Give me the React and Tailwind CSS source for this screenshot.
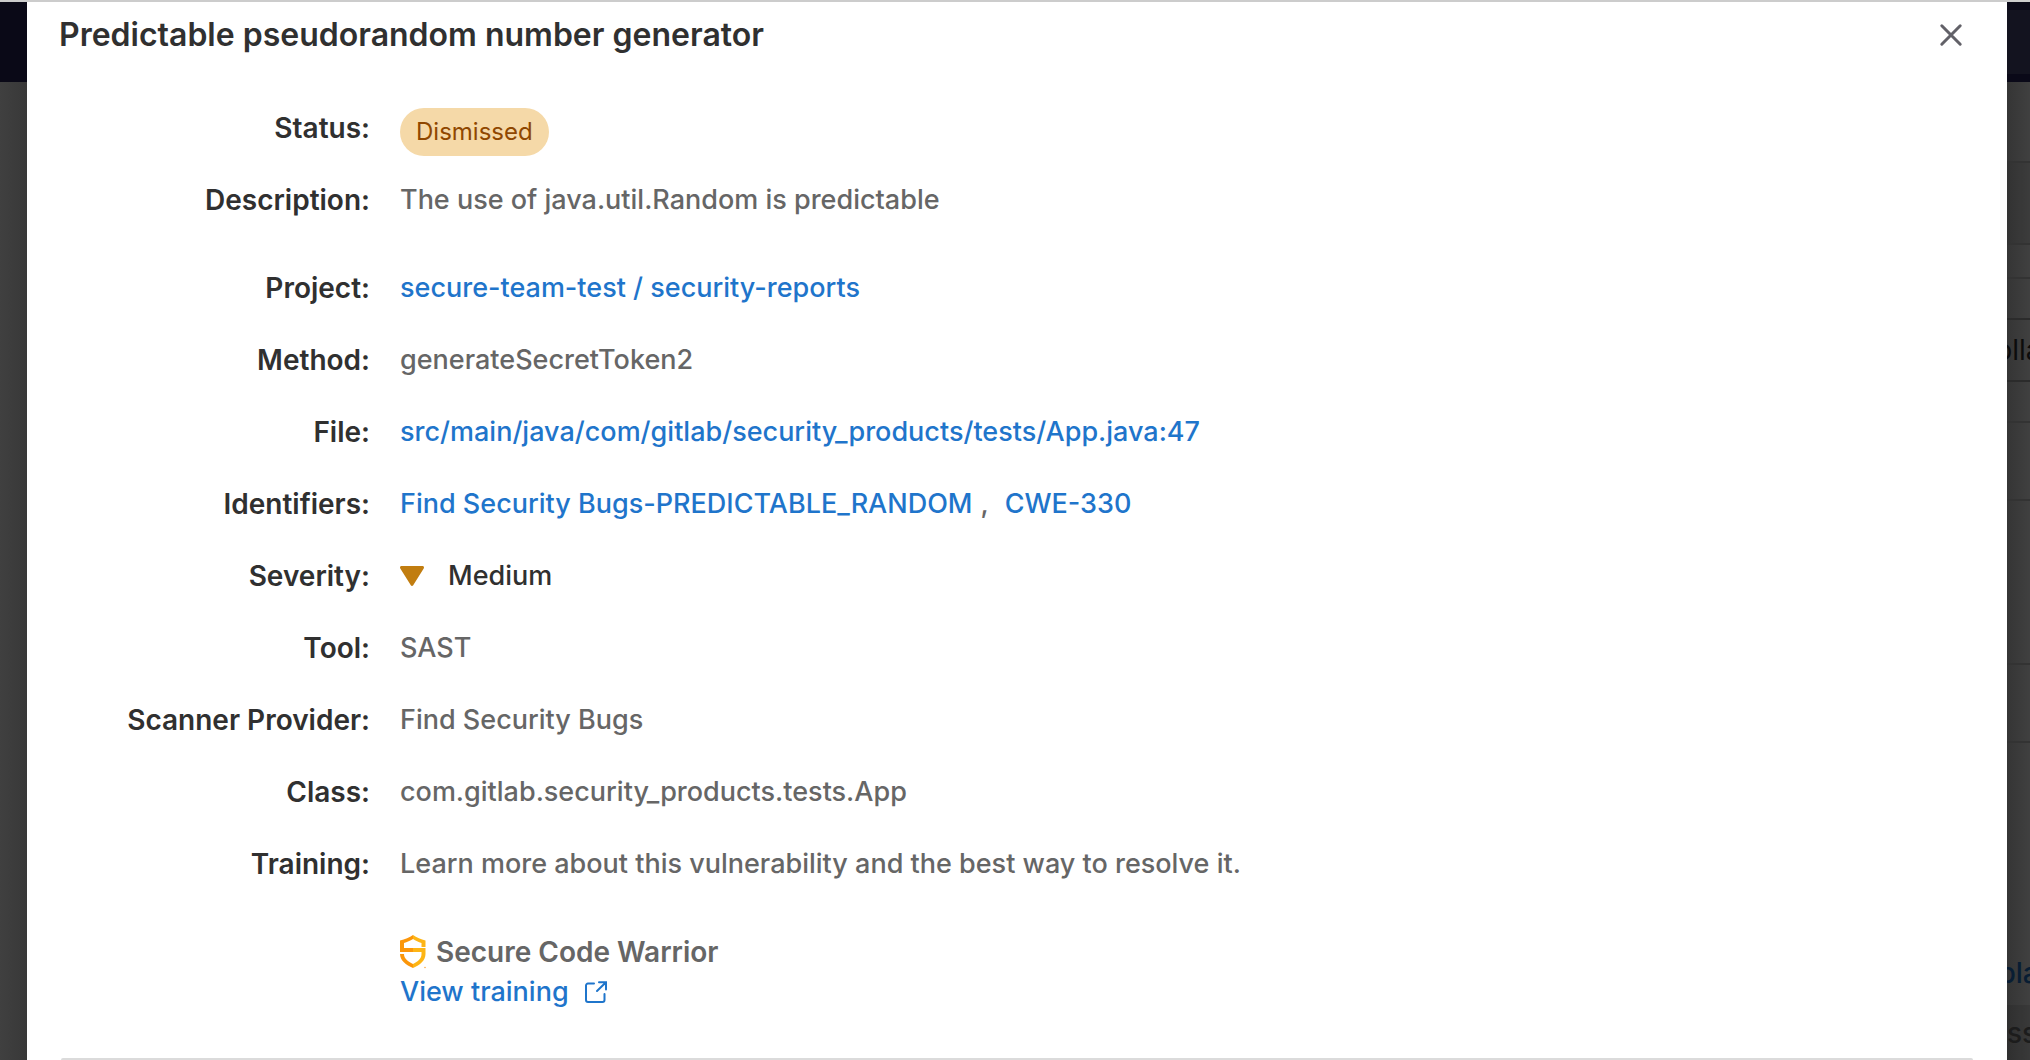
import { useState } from "react";

const linkStyle = "text-[#1f75cb] hover:underline";

function CloseIcon() {
  return (
    <svg width="32" height="32" viewBox="0 0 16 16" aria-hidden="true">
      <path
        d="M3.4 3.4l9.200 9.200M12.600 3.400l-9.200 9.200"
        stroke="#626168"
        strokeWidth="1.5"
        strokeLinecap="round"
      />
    </svg>
  );
}

function SeverityMediumIcon() {
  return (
    <svg width="24" height="20" viewBox="0 0 24 20" aria-hidden="true">
      <path
        d="M1.5 0h21c1.3 0 1.9 1.3 1.2 2.4L13.2 19.2c-.6.9-1.8.9-2.4 0L.3 2.4C-.4 1.300.2 0 1.500 0z"
        fill="#c17d10"
      />
    </svg>
  );
}

function SecureCodeWarriorLogo() {
  return (
    <svg width="28" height="34" viewBox="0 0 28 34" aria-hidden="true">
      <path d="M13 0C9.500 2.500 5 4.500 0 5.500V17h13v-4H4V8C7 7.200 10.300 5.700 13 4z" fill="#fb960a" />
      <path d="M13 0c3.500 2.500 8 4.500 12.500 5.500V12H21.500V8C18.500 7.200 15.700 5.700 13 4z" fill="#fdb515" />
      <path d="M13 13h12.500V19c0 6.500-5.500 11-12.500 14v-4c5-2.300 8.500-5.500 8.500-10v-2H13z" fill="#fdb515" />
      <path d="M0 19h4c0 4.500 4 7.700 9 10v4C6 30 0 25.500 0 19z" fill="#fb960a" />
      <circle cx="25" cy="32.500" r="0.8" fill="#fba94a" />
    </svg>
  );
}

function ExternalLinkIcon() {
  return (
    <svg width="22" height="22" viewBox="0 0 22 22" fill="none" stroke="#1f75cb" strokeWidth="2" aria-hidden="true">
      <path d="M9 2.500H3a2 2 0 0 0-2 2V19a2 2 0 0 0 2 2h14.500a2 2 0 0 0 2-2v-6" strokeLinecap="round" />
      <path d="M14 1.200H21V8.500M20.500 1.700L12 10" strokeLinecap="round" />
    </svg>
  );
}

function DetailRow({ label, children }) {
  return (
    <div className="flex gap-[30px]">
      <dt className="w-[311px] shrink-0 text-right text-[28px] font-semibold text-[#303030]">{label}:</dt>
      <dd className="min-w-0 flex-1 font-medium">{children}</dd>
    </div>
  );
}

// The part of the page that stays visible on the right of the modal
function PageBehind() {
  return (
    <div className="flex w-[23px] shrink-0 flex-col overflow-hidden bg-linear-to-r from-[#353535] to-[#404040] text-[28px] leading-10">
      <div className="h-20 border-y-8 border-[#0a0918] bg-[#13131f]" />
      <div className="h-[81px] border-b-2 border-[#333333]" />
      <div className="h-[82px] border-b-2 border-[#333333] bg-black/5" />
      <div className="h-[34px] border-b-2 border-[#333333]" />
      <div className="h-[41px] border-b-2 border-[#2b2b2b]" />
      <div className="flex h-[62px] items-center justify-center border-b-2 border-[#2b2b2b] text-[#0c0c0c]">olla</div>
      <div className="h-[41px] border-b-2 border-[#333333]" />
      <div className="h-[78px] border-b-2 border-[#333333]" />
      <div className="h-[164px] border-b-2 border-[#333333]" />
      <div className="h-[78px] border-b-2 border-[#333333]" />
      <div className="flex h-[262px] items-end justify-center pb-3 font-medium text-[#081d33]">pla</div>
      <div className="flex flex-1 items-start bg-black/10 pt-2 font-medium text-[#1c1c1c]">ss</div>
    </div>
  );
}

function App() {
  const [open, setOpen] = useState(true);

  return (
    <div className="flex min-h-screen flex-col border-t-2 border-[#cccccc] bg-[#404040] font-['Inter',sans-serif]">
      <div className="flex flex-1">
        <div className="w-[27px] shrink-0 bg-linear-to-r from-[#404040] to-[#383838]">
          <div className="h-20 bg-[#0a0917]" />
        </div>
        {open && (
          <main role="dialog" aria-labelledby="modal-title" className="flex min-w-0 flex-1 flex-col bg-white px-8">
            <header className="flex h-[66px] items-center justify-between pr-2">
              <h1 id="modal-title" className="text-[32px] leading-10 font-semibold text-[#303030]">
                Predictable pseudorandom number generator
              </h1>
              <button type="button" aria-label="Close" onClick={() => setOpen(false)}>
                <CloseIcon />
              </button>
            </header>
            <dl className="flex flex-col gap-8 pt-10 text-[27px] leading-10 text-[#666666]">
              <DetailRow label="Status">
                <span className="flex h-10 items-start">
                  <span className="h-12 shrink-0 rounded-full bg-[#f5d9a8] px-4 text-[24px] leading-12 font-normal text-[#8f4700]">
                    Dismissed
                  </span>
                </span>
              </DetailRow>
              <DetailRow label="Description">
                <p className="pb-4">The use of java.util.Random is predictable</p>
              </DetailRow>
              <DetailRow label="Project">
                <a href="#project" className={linkStyle}>secure-team-test / security-reports</a>
              </DetailRow>
              <DetailRow label="Method">generateSecretToken2</DetailRow>
              <DetailRow label="File">
                <a href="#file" className={linkStyle}>
                  src/main/java/com/gitlab/security_products/tests/App.java:47
                </a>
              </DetailRow>
              <DetailRow label="Identifiers">
                <a href="#bug" className={linkStyle}>Find Security Bugs-PREDICTABLE_RANDOM</a>
                <span className="pr-4 pl-2">,</span>
                <a href="#cwe" className={linkStyle}>CWE-330</a>
              </DetailRow>
              <DetailRow label="Severity">
                <span className="flex items-center gap-6 text-[#303030]">
                  <SeverityMediumIcon />
                  Medium
                </span>
              </DetailRow>
              <DetailRow label="Tool">SAST</DetailRow>
              <DetailRow label="Scanner Provider">Find Security Bugs</DetailRow>
              <DetailRow label="Class">com.gitlab.security_products.tests.App</DetailRow>
              <DetailRow label="Training">
                <p>Learn more about this vulnerability and the best way to resolve it.</p>
                <div className="flex items-center gap-2 pt-12 text-[28px] font-semibold">
                  <SecureCodeWarriorLogo />
                  Secure Code Warrior
                </div>
                <a href="#training" className="inline-flex items-center gap-4 text-[#1f75cb] hover:underline">
                  View training
                  <ExternalLinkIcon />
                </a>
              </DetailRow>
            </dl>
            <div className="mx-0.5 mt-[46px] h-0.5 rounded-t-full bg-[#dbdbdb]" />
          </main>
        )}
        <PageBehind />
      </div>
    </div>
  );
}

export default App;
